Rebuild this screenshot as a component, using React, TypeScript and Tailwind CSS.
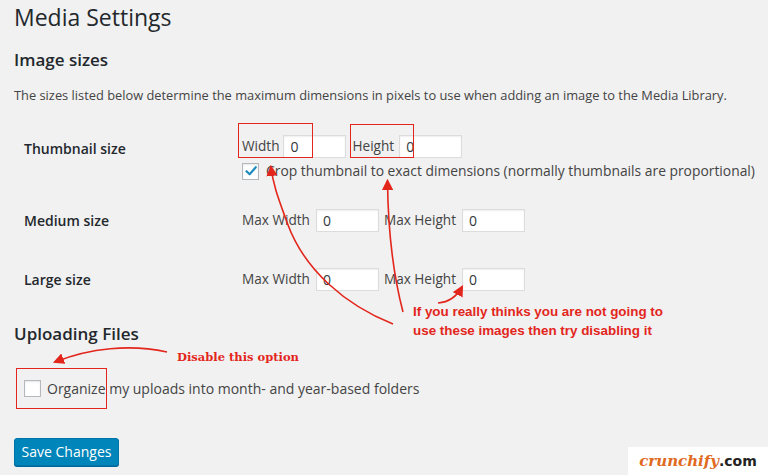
import React from "react";

const red = "#e3261c";

function TextInput() {
  return (
    <div className="h-[23px] w-[63px] border border-[#dcdcdc] bg-white pl-[6px] text-[14px] leading-[21px] text-[#32373c] shadow-[inset_0_1px_2px_rgba(0,0,0,0.07)]">
      0
    </div>
  );
}

function Checkbox({ checked }: { checked?: boolean }) {
  return (
    <span className="flex h-[17px] w-[17px] shrink-0 items-center justify-center border border-[#b4b9be] bg-white shadow-[inset_0_1px_2px_rgba(0,0,0,0.1)]">
      {checked && (
        <svg width="14" height="14" viewBox="0 0 14 14">
          <path d="M2.5 7.2 L5.6 10.2 L11.8 3.2" fill="none" stroke="#1e8cbe" strokeWidth="2.2" strokeLinecap="round" strokeLinejoin="round" />
        </svg>
      )}
    </span>
  );
}

function SizeRow({ label }: { label: string }) {
  return (
    <div className="flex items-center">
      <div className="w-[228px] shrink-0 pl-[10px] text-[14px] font-semibold text-[#23282d]">{label}</div>
      <div className="flex items-center whitespace-nowrap text-[13.6px] text-[#444]">
        <span className="mr-[6px]">Max Width</span>
        <TextInput />
        <span className="ml-[5px] mr-[6px]">Max Height</span>
        <TextInput />
      </div>
    </div>
  );
}

function Annotations() {
  return (
    <div className="pointer-events-none absolute inset-0">
      <div className="absolute left-[238px] top-[123px] h-[35px] w-[75px] border-[1.5px] border-[#e3261c]" />
      <div className="absolute left-[350px] top-[124px] h-[34px] w-[64px] border-[1.5px] border-[#e3261c]" />
      <div className="absolute left-[16px] top-[368px] h-[41px] w-[91px] border-[1.5px] border-[#e3261c]" />
      <svg className="absolute inset-0" width="768" height="475" viewBox="0 0 768 475">
        <defs>
          <marker id="ah" viewBox="0 0 10 10" refX="8" refY="5" markerWidth="7" markerHeight="7" orient="auto-start-reverse">
            <path d="M0 0 L10 5 L0 10 z" fill={red} />
          </marker>
        </defs>
        <g fill="none" stroke={red} strokeWidth="1.6">
          <path d="M393 324 C345 305 305 270 288 225 C279 200 273 185 271 167" markerEnd="url(#ah)" />
          <path d="M403 312 C392 270 388 230 387.5 181" markerEnd="url(#ah)" />
          <path d="M438 303 C450 302 457 296 462 287" markerEnd="url(#ah)" />
          <path d="M167 352 C130 344 90 348 55 362" markerEnd="url(#ah)" />
        </g>
      </svg>
      <div
        className="absolute left-[413px] top-[302px] whitespace-nowrap text-[13.4px] font-bold leading-[19px] text-[#e3261c]"
        style={{ fontFamily: '"Liberation Sans", Arial, sans-serif' }}
      >
        <div>If you really thinks you are not going to</div>
        <div>use these images then try disabling it</div>
      </div>
      <div
        className="absolute left-[177px] top-[348px] whitespace-nowrap text-[11.5px] font-bold leading-[18px] text-[#e3261c]"
        style={{ fontFamily: '"DejaVu Serif", "Liberation Serif", serif' }}
      >
        Disable this option
      </div>
      <div className="absolute left-[628px] top-[447px] flex h-[28px] w-[140px] items-center justify-center bg-white">
        <span
          className="text-[15px] font-bold italic text-[#e06a1f]"
          style={{ fontFamily: '"DejaVu Serif", serif' }}
        >
          crunchify
        </span>
        <span className="text-[14px] font-bold text-[#222]" style={{ fontFamily: '"DejaVu Sans", sans-serif' }}>
          .com
        </span>
      </div>
    </div>
  );
}

export default function App() {
  return (
    <div
      className="relative h-[475px] w-[768px] overflow-hidden bg-[#f1f1f1] px-[14px] text-[#444]"
      style={{ fontFamily: '"Open Sans", "Noto Sans", sans-serif' }}
    >
      <h1 className="pt-[3px] text-[23px] leading-[29px] text-[#23282d]">Media Settings</h1>
      <h2 className="mt-[17px] text-[17px] font-semibold leading-[22px] text-[#23282d]">Image sizes</h2>
      <p className="mt-[15px] whitespace-nowrap text-[12.85px] leading-[18px]">
        The sizes listed below determine the maximum dimensions in pixels to use when adding an image to the Media Library.
      </p>

      <div className="mt-[31px] flex">
        <div className="w-[228px] shrink-0 pl-[10px] pt-[3px] text-[14px] font-semibold leading-[22px] text-[#23282d]">Thumbnail size</div>
        <div className="flex flex-col whitespace-nowrap text-[13.6px]">
          <div className="flex items-center">
            <span className="mr-[4px]">Width</span>
            <TextInput />
            <span className="ml-[6px] mr-[5px]">Height</span>
            <TextInput />
          </div>
          <div className="mt-[3px] flex items-center">
            <Checkbox checked />
            <span className="ml-[7px] text-[13.85px]">Crop thumbnail to exact dimensions (normally thumbnails are proportional)</span>
          </div>
        </div>
      </div>

      <div className="mt-[27px]">
        <SizeRow label="Medium size" />
      </div>
      <div className="mt-[36px]">
        <SizeRow label="Large size" />
      </div>

      <h2 className="mt-[32px] text-[17px] font-semibold leading-[22px] text-[#23282d]">Uploading Files</h2>
      <div className="mt-[33px] flex items-center pl-[10px] text-[14px]">
        <Checkbox />
        <span className="ml-[6px] text-[#444]">Organize my uploads into month- and year-based folders</span>
      </div>

      <button
        type="button"
        className="mt-[39px] h-[28px] w-[105px] rounded-[3px] border border-[#0073aa] bg-[#0085ba] text-[14px] leading-[26px] text-white shadow-[0_1px_0_#006799]"
      >
        Save Changes
      </button>

      <Annotations />
    </div>
  );
}
